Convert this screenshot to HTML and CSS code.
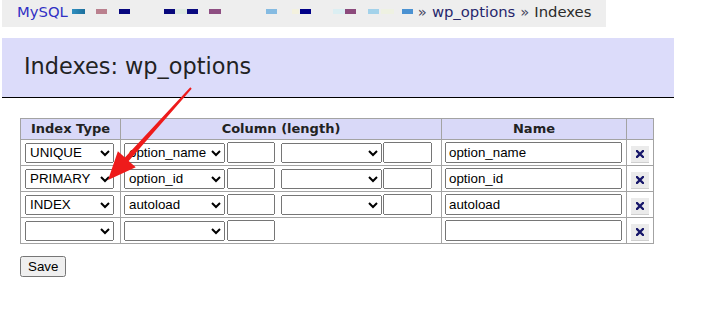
FILE: index.html
```html
<!DOCTYPE html>
<html>
<head>
<meta charset="utf-8">
<link rel="stylesheet" href="styles.css">
</head>
<body>
<div class="crumbs">
  <a class="c-link">MySQL</a>
  <span class="r r1"></span>
  <span class="r r2"></span>
  <span class="r r3"></span>
  <span class="r r4"></span>
  <span class="r f1"></span>
  <span class="r r5"></span>
  <span class="r r6"></span>
  <span class="r r7"></span>
  <span class="r f2"></span>
  <span class="r r8"></span>
  <span class="r f3"></span>
  <span class="r r9"></span>
  <span class="r r10"></span>
  <span class="r f4"></span>
  <span class="r r11"></span>
  <span class="sep">»</span>
  <a class="c-tbl">wp_options</a>
  <span class="sep">»</span>
  <span class="c-cur">Indexes</span>
</div>
<h2 class="title">Indexes: wp_options</h2>
<form class="idx-form">
  <table class="idx">
    <colgroup>
      <col class="w1"><col class="w2"><col class="w3"><col class="w4">
    </colgroup>
    <tr>
      <th>Index Type</th>
      <th>Column (length)</th>
      <th>Name</th>
      <th></th>
    </tr>
    <tr>
      <td class="td-type"><div class="cell"><select class="sel-type"><option>UNIQUE</option></select></div></td>
      <td><div class="cell"><select class="sel-col"><option>option_name</option></select><input class="len len1" type="text"><select class="sel-col sel2"><option></option></select><input class="len len2" type="text"></div></td>
      <td><div class="cell"><input class="name" type="text" value="option_name"></div></td>
      <td class="td-x"><div class="cell"><span class="drop"><svg width="8" height="8" viewBox="0 0 8 8"><path d="M1 1L7 7M7 1L1 7" stroke="#16166a" stroke-width="2.3" stroke-linecap="square"/></svg></span></div></td>
    </tr>
    <tr>
      <td class="td-type"><div class="cell"><select class="sel-type"><option>PRIMARY</option></select></div></td>
      <td><div class="cell"><select class="sel-col"><option>option_id</option></select><input class="len len1" type="text"><select class="sel-col sel2"><option></option></select><input class="len len2" type="text"></div></td>
      <td><div class="cell"><input class="name" type="text" value="option_id"></div></td>
      <td class="td-x"><div class="cell"><span class="drop"><svg width="8" height="8" viewBox="0 0 8 8"><path d="M1 1L7 7M7 1L1 7" stroke="#16166a" stroke-width="2.3" stroke-linecap="square"/></svg></span></div></td>
    </tr>
    <tr>
      <td class="td-type"><div class="cell"><select class="sel-type"><option>INDEX</option></select></div></td>
      <td><div class="cell"><select class="sel-col"><option>autoload</option></select><input class="len len1" type="text"><select class="sel-col sel2"><option></option></select><input class="len len2" type="text"></div></td>
      <td><div class="cell"><input class="name" type="text" value="autoload"></div></td>
      <td class="td-x"><div class="cell"><span class="drop"><svg width="8" height="8" viewBox="0 0 8 8"><path d="M1 1L7 7M7 1L1 7" stroke="#16166a" stroke-width="2.3" stroke-linecap="square"/></svg></span></div></td>
    </tr>
    <tr>
      <td class="td-type"><div class="cell"><select class="sel-type"><option></option></select></div></td>
      <td><div class="cell"><select class="sel-col"><option></option></select><input class="len len1" type="text"></div></td>
      <td><div class="cell"><input class="name" type="text" value=""></div></td>
      <td class="td-x"><div class="cell"><span class="drop"><svg width="8" height="8" viewBox="0 0 8 8"><path d="M1 1L7 7M7 1L1 7" stroke="#16166a" stroke-width="2.3" stroke-linecap="square"/></svg></span></div></td>
    </tr>
  </table>
  <button class="save" type="button">Save</button>
</form>
<svg class="arrow" width="710" height="335" viewBox="0 0 710 335">
  <polygon fill="#ee1b1b" points="108,180 117.9,151.2 124.9,157.5 190.3,87.3 191.7,88.7 128.7,160.9 135.7,167.2"/>
</svg>
</body>
</html>
```
FILE: styles.css
```css
body {
  margin: 0;
  padding: 0 2px;
  font-family: "DejaVu Sans", Verdana, sans-serif;
  background: #ffffff;
  position: relative;
  color: #222222;
}

.crumbs {
  display: flex;
  align-items: flex-start;
  width: 604px;
  height: 27px;
  box-sizing: border-box;
  padding-left: 15px;
  background: #eeeeee;
  font-size: 14.8px;
  line-height: 24px;
  white-space: nowrap;
}

.c-link { color: #3131c4; }
.c-tbl { color: #26266c; margin-left: 5px; }
.c-cur { color: #2a2a2a; margin-left: 5px; }
.sep { color: #454560; margin-left: 5px; }

.r {
  display: inline-block;
  height: 5px;
  width: 11px;
  margin-top: 9px;
  flex: none;
}
.r1 { margin-left: 4px; width: 13px; background: linear-gradient(90deg, #2f8fc0, #1d6f9c); }
.r2 { margin-left: 11px; background: #ba808e; }
.r3 { margin-left: 12px; background: #06067e; }
.r4 { margin-left: 34px; background: #08087c; }
.f1 { width: 12px; background: #dde9e1; }
.r5 { background: #0a0a80; }
.r6 { margin-left: 11px; width: 12px; background: #8e4e82; }
.r7 { margin-left: 45px; background: #85bbe2; }
.f2 { margin-left: 15px; width: 7px; background: #f3f1de; }
.r8 { margin-left: 1px; background: #000088; }
.f3 { margin-left: 22px; width: 12px; background: #dbeef2; }
.r9 { background: #8c4a7c; }
.r10 { margin-left: 12px; background: #a3d2ea; }
.f4 { margin-left: 2px; width: 13px; background: #eef1e2; }
.r11 { margin-left: 8px; background: #4b92d2; }

.title {
  margin: 11px 0 0;
  width: 672px;
  box-sizing: border-box;
  padding: 15px 22px 17px;
  background: #dcdcfa;
  border-bottom: 1px solid #000000;
  font-size: 22.4px;
  font-weight: normal;
  line-height: 27px;
  color: #222222;
}

.idx-form {
  margin: 20px 0 0 18px;
}

.idx {
  border-collapse: collapse;
  table-layout: fixed;
  width: 634px;
}
.w1 { width: 100px; }
.w2 { width: 321px; }
.w3 { width: 185px; }
.w4 { width: 27px; }

.idx th {
  background: #d9d9f8;
  border: 1px solid #a3a3a3;
  padding: 2px 3px;
  height: 16px;
  line-height: 16px;
  font-size: 13px;
  font-weight: bold;
  color: #222222;
  text-align: center;
}

.idx td {
  border: 1px solid #a3a3a3;
  padding: 2px 3px;
  vertical-align: middle;
}
.idx td.td-type { padding-left: 4px; }
.idx td.td-x { padding-left: 4px; }

.cell {
  display: flex;
  align-items: center;
  height: 21px;
}

select, input, button {
  font-family: "Liberation Sans", Arial, sans-serif;
  font-size: 13.33px;
  box-sizing: border-box;
  margin: 0;
}

.sel-type { width: 89px; height: 20px; }
.sel-col { width: 101px; height: 20px; }
.sel2 { margin-left: 6px; }
.len { width: 48px; height: 21px; }
.len1 { margin-left: 2px; }
.len2 { margin-left: 1px; width: 49px; }
.name { width: 177px; height: 21px; }

.drop {
  display: flex;
  align-items: center;
  justify-content: center;
  width: 18px;
  height: 16px;
  margin-top: 3px;
  background: #ebebeb;
  border-bottom: 1px solid #cfcfcf;
}

.save {
  display: block;
  margin-top: 12px;
  height: 21px;
  padding: 1px 6px;
}

.arrow {
  position: absolute;
  left: 0;
  top: 0;
  pointer-events: none;
}
```
